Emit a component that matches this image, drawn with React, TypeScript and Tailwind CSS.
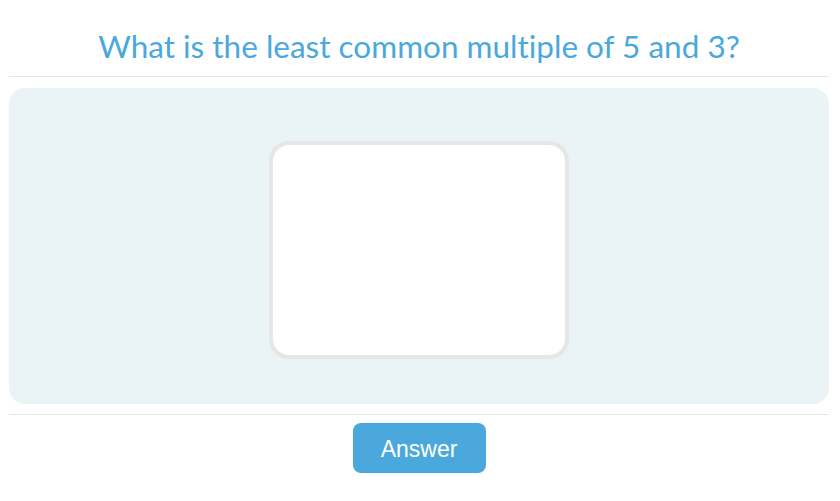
export default function App() {
  return (
    <div className="w-[840px] h-[501px] bg-white px-[9px] pr-[11px]">
      {/* Question */}
      <div className="h-[77px] border-b border-[#e5e7e8] flex items-center justify-center pt-[17px]">
        <h1
          className="text-[31.5px] text-[#4aa8dc] leading-none [font-variant-ligatures:none]"
          style={{ fontFamily: '"Lato", "Noto Sans", sans-serif' }}
        >
          What is the least common multiple of 5 and 3?
        </h1>
      </div>

      {/* Work area */}
      <div className="mt-[11px] h-[316px] rounded-[16px] bg-[#eaf3f6] flex justify-center pt-[53px]">
        <div className="w-[300px] h-[218px] rounded-[20px] border-4 border-[#e6e6e6] bg-white" />
      </div>

      {/* Footer */}
      <div className="mt-[10px] border-t border-[#e5e7e8] flex justify-center pt-[8px]">
        <button
          className="w-[133px] h-[50px] rounded-[8px] bg-[#4aa8dc] text-white text-[23px] pt-[3px]"
          style={{ fontFamily: '"Liberation Sans", Arial, sans-serif' }}
        >
          Answer
        </button>
      </div>
    </div>
  );
}
